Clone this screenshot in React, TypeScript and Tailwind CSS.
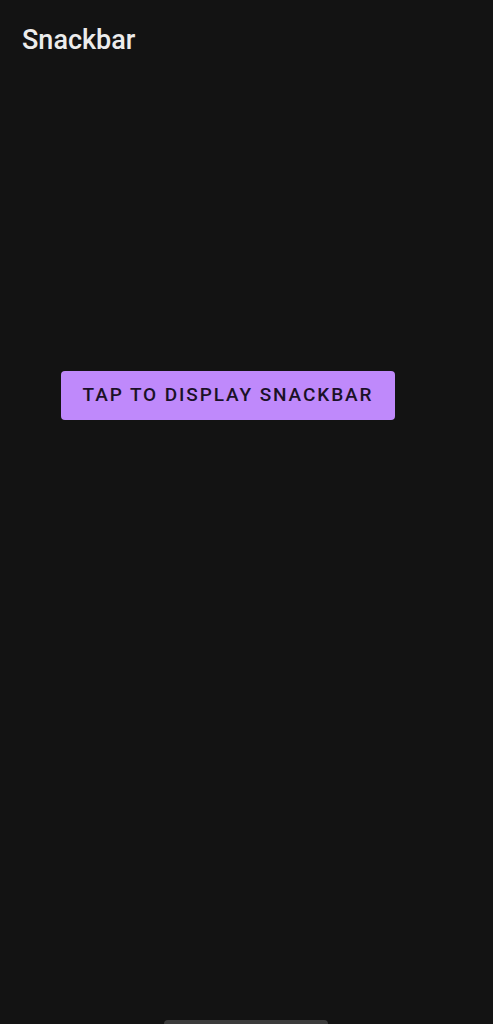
import React from 'react';

export default function App() {
  return (
    <div
      className="relative flex h-[1024px] w-full flex-col bg-[#131313] overflow-hidden"
      style={{ fontFamily: 'Roboto, "Noto Sans", sans-serif' }}
    >
      {/* Top app bar */}
      <div className="flex h-[80px] items-start px-[22px] pt-[22px]">
        <h1 className="text-[27px] leading-[36px] font-medium text-[#ececec]">Snackbar</h1>
      </div>

      {/* Content */}
      <div className="flex pl-[61px] pt-[291px]">
        <button className="h-[49px] w-[334px] rounded-[4px] bg-[#bf89fb] text-[19px] font-medium tracking-[0.1em] text-[#1b1127]">
          TAP TO DISPLAY SNACKBAR
        </button>
      </div>

      {/* Gesture handle */}
      <div className="absolute bottom-0 left-[164px] h-[4px] w-[164px] rounded-t-full bg-[#3b3b3b]" />
    </div>
  );
}
